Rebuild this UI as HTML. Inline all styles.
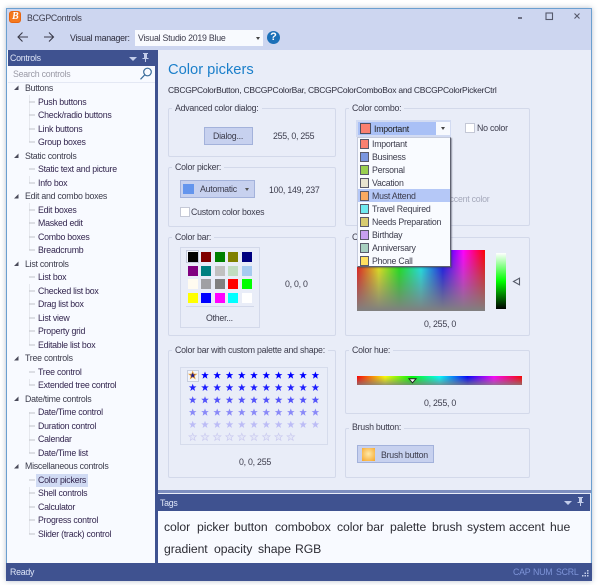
<!DOCTYPE html>
<html><head><meta charset="utf-8">
<style>
html,body{margin:0;padding:0;background:#fff;width:600px;height:585px;overflow:hidden}
#w{position:absolute;left:0;top:0;width:600px;height:585px;overflow:hidden;font-family:"Liberation Sans",sans-serif;font-size:8.8px;letter-spacing:-.25px;color:#3c3c4c;filter:blur(.3px)}
.a,.t,.g{position:absolute}
.t{white-space:nowrap;line-height:12px;height:12px}
.g{border:1px solid #d3d9ea;border-radius:2px;box-sizing:border-box}
.l{background:#e9edf8;padding:0 3px}
.btn{position:absolute;box-sizing:border-box;background:#c7d1ef;border:1px solid #a3b2db}
.sw{position:absolute;width:9px;height:10px;box-sizing:border-box;border:1px solid #5a5a6a}
.c{position:absolute;width:10px;height:10px}
.n{color:#33264f}
.tag{font-size:12.2px;letter-spacing:-.05px;color:#2c2c34;position:absolute;white-space:nowrap;line-height:16px}
</style></head><body><div id="w">
<!-- window -->
<div class="a" style="left:6px;top:8px;width:586px;height:573px;background:#cdd6f0;border:1px solid #6b9fd0;box-sizing:border-box;box-shadow:0 0 5px rgba(90,110,140,.45)"></div>
<div class="a" style="left:7px;top:50px;width:584px;height:513px;background:#e9edf8"></div>
<!-- title -->
<div class="a" style="left:9px;top:11px;width:12px;height:12px;background:#f4791f;border-radius:3px;border:1px solid #e8650f;box-sizing:border-box"></div>
<div class="t" style="left:12px;top:11px;color:#fff;font:italic bold 10px 'Liberation Serif',serif;letter-spacing:0">B</div>
<div class="t" style="left:27px;top:12px">BCGPControls</div>
<svg class="a" style="left:15px;top:30px" width="40" height="14" fill="none" stroke="#3a3a4a" stroke-width="1.1"><path d="M3 7H13M7.500 2.500 3 7l4.500 4.500M29 7H38.500M34 2.500 38.500 7 34 11.500"/></svg>
<div class="t" style="left:70px;top:32px;color:#2c2c3c">Visual manager:</div>
<div class="a" style="left:135px;top:30px;width:128px;height:16px;background:#f8fafe"></div>
<div class="t" style="left:138px;top:32px">Visual Studio 2019 Blue</div>
<div class="a" style="left:256px;top:37px;border:2px solid transparent;border-top:3px solid #444;border-bottom:0"></div>
<div class="a" style="left:267px;top:31px;width:13px;height:13px;border-radius:50%;background:#1b70b8;color:#fff;font:bold 11px/13px 'Liberation Sans',sans-serif;text-align:center;letter-spacing:0">?</div>
<svg class="a" style="left:515px;top:10px" width="70" height="14" fill="none" stroke="#55586a" stroke-width="1.1"><path d="M3 8H7" stroke-width="1.600"/><rect x="31" y="3" width="6.500" height="6.500"/><path d="M59.500 3.500 64.500 8.500M64.500 3.500 59.500 8.500"/></svg>
<!-- left panel -->
<div class="a" style="left:7px;top:50px;width:148px;height:513px;background:#f8faff"></div>
<div class="a" style="left:8px;top:50px;width:147px;height:16px;background:#3f5290"></div>
<div class="a" style="left:155px;top:50px;width:3px;height:531px;background:#3f5290"></div>
<div class="t" style="left:10px;top:52px;color:#dfe6f8">Controls</div>
<svg class="a" style="left:128px;top:51px" width="26" height="13" fill="#c3cdea"><path d="M1 6H9L5 10z"/><path d="M15 2h5v1h-1v4h1.500v1H18v3h-1V8h-2.500V7H16V3h-1z"/></svg>
<div class="t" style="left:13px;top:68px;color:#9a9aa6">Search controls</div>
<svg class="a" style="left:139px;top:67px" width="14" height="14" fill="none" stroke="#3a6c9a" stroke-width="1.200"><circle cx="8.500" cy="5" r="3.800"/><path d="M5.800 7.800 1.500 12.300"/></svg>
<div class="a" style="left:8px;top:82px;width:147px;height:1px;background:#e4e8f4"></div>
<!-- tree lines -->
<div class="a" style="left:36px;top:474px;width:52px;height:13px;background:#d0daf3"></div>
<svg class="a" style="left:0;top:80px" width="40" height="470" fill="none" stroke-width="1"><path stroke="#e6e8ee" d="M29.500 15V62M29.500 96V103M29.500 123V170M29.500 204V265M29.500 299V305M29.500 332V373M29.500 407V454"/><path stroke="#c0c2c8" d="M29 22H35M29 35H35M29 49H35M29 62H35M29 89H35M29 103H35M29 130H35M29 143H35M29 157H35M29 170H35M29 197H35M29 211H35M29 224H35M29 238H35M29 251H35M29 265H35M29 292H35M29 305H35M29 333H35M29 346H35M29 360H35M29 373H35M29 400H35M29 413H35M29 427H35M29 440H35M29 454H35"/></svg>
<svg class="a" style="left:13px;top:84px" width="8" height="390" fill="#4a4a5a"><path d="M1 6 5.500 1.500V6zM1 74 5.500 69.500V74zM1 114.500 5.500 110V114.500zM1 182 5.500 177.500V182zM1 276.500 5.500 272V276.500zM1 317 5.500 312.500V317zM1 384.500 5.500 380V384.500z"/></svg>
<div class="t" style="left:25px;top:82px">Buttons</div>
<div class="t n" style="left:38px;top:96px">Push buttons</div>
<div class="t n" style="left:38px;top:109px">Check/radio buttons</div>
<div class="t n" style="left:38px;top:123px">Link buttons</div>
<div class="t n" style="left:38px;top:136px">Group boxes</div>
<div class="t" style="left:25px;top:150px">Static controls</div>
<div class="t n" style="left:38px;top:163px">Static text and picture</div>
<div class="t n" style="left:38px;top:177px">Info box</div>
<div class="t" style="left:25px;top:190px">Edit and combo boxes</div>
<div class="t n" style="left:38px;top:204px">Edit boxes</div>
<div class="t n" style="left:38px;top:217px">Masked edit</div>
<div class="t n" style="left:38px;top:231px">Combo boxes</div>
<div class="t n" style="left:38px;top:244px">Breadcrumb</div>
<div class="t" style="left:25px;top:258px">List controls</div>
<div class="t n" style="left:38px;top:271px">List box</div>
<div class="t n" style="left:38px;top:285px">Checked list box</div>
<div class="t n" style="left:38px;top:298px">Drag list box</div>
<div class="t n" style="left:38px;top:312px">List view</div>
<div class="t n" style="left:38px;top:325px">Property grid</div>
<div class="t n" style="left:38px;top:339px">Editable list box</div>
<div class="t" style="left:25px;top:352px">Tree controls</div>
<div class="t n" style="left:38px;top:366px">Tree control</div>
<div class="t n" style="left:38px;top:379px">Extended tree control</div>
<div class="t" style="left:25px;top:393px">Date/time controls</div>
<div class="t n" style="left:38px;top:406px">Date/Time control</div>
<div class="t n" style="left:38px;top:420px">Duration control</div>
<div class="t n" style="left:38px;top:433px">Calendar</div>
<div class="t n" style="left:38px;top:447px">Date/Time list</div>
<div class="t" style="left:25px;top:460px">Miscellaneous controls</div>
<div class="t n" style="left:38px;top:474px">Color pickers</div>
<div class="t n" style="left:38px;top:487px">Shell controls</div>
<div class="t n" style="left:38px;top:501px">Calculator</div>
<div class="t n" style="left:38px;top:514px">Progress control</div>
<div class="t n" style="left:38px;top:528px">Slider (track) control</div>
<!-- main -->
<div class="t" style="left:168px;top:60px;height:20px;line-height:20px;font-size:14.700px;letter-spacing:0;color:#1b7fca">Color pickers</div>
<div class="t" style="left:168px;top:84px;color:#2c2c3c;font-size:8.5px;letter-spacing:-.24px">CBCGPColorButton, CBCGPColorBar, CBCGPColorComboBox and CBCGPColorPickerCtrl</div>
<!-- group frames -->
<div class="g" style="left:168px;top:108px;width:168px;height:49px"></div>
<div class="t l" style="left:172px;top:102px">Advanced color dialog:</div>
<div class="g" style="left:168px;top:167px;width:168px;height:60px"></div>
<div class="t l" style="left:172px;top:161px">Color picker:</div>
<div class="g" style="left:168px;top:237px;width:168px;height:99px"></div>
<div class="t l" style="left:172px;top:231px">Color bar:</div>
<div class="g" style="left:168px;top:350px;width:168px;height:128px"></div>
<div class="t l" style="left:172px;top:344px">Color bar with custom palette and shape:</div>
<div class="g" style="left:345px;top:108px;width:185px;height:118px"></div>
<div class="t l" style="left:349px;top:102px">Color combo:</div>
<div class="g" style="left:345px;top:237px;width:185px;height:99px"></div>
<div class="t l" style="left:349px;top:231px">Color picker:</div>
<div class="g" style="left:345px;top:350px;width:185px;height:64px"></div>
<div class="t l" style="left:349px;top:344px">Color hue:</div>
<div class="g" style="left:345px;top:428px;width:185px;height:50px"></div>
<div class="t l" style="left:349px;top:421px">Brush button:</div>
<!-- advanced -->
<div class="btn" style="left:204px;top:127px;width:49px;height:18px"></div>
<div class="t" style="left:213px;top:130px">Dialog...</div>
<div class="t" style="left:273px;top:130px">255, 0, 255</div>
<!-- picker -->
<div class="btn" style="left:180px;top:180px;width:75px;height:18px"></div>
<div class="a" style="left:183px;top:184px;width:11px;height:10px;background:#6495ed"></div>
<div class="t" style="left:200px;top:183px">Automatic</div>
<div class="a" style="left:245px;top:188px;border:2px solid transparent;border-top:3px solid #555;border-bottom:0"></div>
<div class="t" style="left:269px;top:184px">100, 149, 237</div>
<div class="a" style="left:180px;top:207px;width:8px;height:8px;background:#fff;border:1px solid #c4c8d6"></div>
<div class="t" style="left:191px;top:206px">Custom color boxes</div>
<!-- color bar -->
<div class="a" style="left:180px;top:247px;width:80px;height:81px;border:1px solid #d3d9ea;box-sizing:border-box"></div>
<div class="a" style="left:186px;top:250px;width:13px;height:13px;background:#f3f5fb;border:1px solid #c3c9dc;box-sizing:border-box"></div>
<div class="c" style="left:188px;top:252px;background:#000"></div>
<div class="c" style="left:201px;top:252px;background:#800000"></div>
<div class="c" style="left:215px;top:252px;background:#008000"></div>
<div class="c" style="left:228px;top:252px;background:#808000"></div>
<div class="c" style="left:242px;top:252px;background:#000080"></div>
<div class="c" style="left:188px;top:266px;background:#800080"></div>
<div class="c" style="left:201px;top:266px;background:#008080"></div>
<div class="c" style="left:215px;top:266px;background:#c0c0c0"></div>
<div class="c" style="left:228px;top:266px;background:#c0dcc0"></div>
<div class="c" style="left:242px;top:266px;background:#a6caf0"></div>
<div class="c" style="left:188px;top:279px;background:#fffbf0"></div>
<div class="c" style="left:201px;top:279px;background:#a0a0a4"></div>
<div class="c" style="left:215px;top:279px;background:#808080"></div>
<div class="c" style="left:228px;top:279px;background:#f00"></div>
<div class="c" style="left:242px;top:279px;background:#0f0"></div>
<div class="c" style="left:188px;top:293px;background:#ff0"></div>
<div class="c" style="left:201px;top:293px;background:#00f"></div>
<div class="c" style="left:215px;top:293px;background:#f0f"></div>
<div class="c" style="left:228px;top:293px;background:#0ff"></div>
<div class="c" style="left:242px;top:293px;background:#fff"></div>
<div class="a" style="left:186px;top:306px;width:68px;height:1px;background:#d2d8ea"></div>
<div class="t" style="left:206px;top:312px">Other...</div>
<div class="t" style="left:285px;top:278px">0, 0, 0</div>
<!-- stars -->
<div class="a" style="left:180px;top:367px;width:148px;height:78px;border:1px solid #d6dcec;box-sizing:border-box"></div>
<div class="a" style="left:187px;top:370px;width:12px;height:12px;background:#f3f5fb;border:1px solid #c8cede;box-sizing:border-box"></div>
<svg class="a" style="left:180px;top:367px" width="148" height="78">
<defs><polygon id="s" points="0,-3.800 1,-1.200 3.800,-1.200 1.600,0.500 2.400,3.400 0,1.700 -2.400,3.400 -1.600,0.500 -3.800,-1.200 -1,-1.200"/></defs>
<g fill="#0000ff"><use href="#s" x="12.700" y="8.300" fill="#1a1a90" stroke="#f0a030" stroke-width=".7"/><use href="#s" x="25" y="8.300"/><use href="#s" x="37.200" y="8.300"/><use href="#s" x="49.500" y="8.300"/><use href="#s" x="61.800" y="8.300"/><use href="#s" x="74" y="8.300"/><use href="#s" x="86.300" y="8.300"/><use href="#s" x="98.600" y="8.300"/><use href="#s" x="110.800" y="8.300"/><use href="#s" x="123.100" y="8.300"/><use href="#s" x="135.400" y="8.300"/></g>
<g fill="#1f1fff"><use href="#s" x="12.700" y="20.600"/><use href="#s" x="25" y="20.600"/><use href="#s" x="37.200" y="20.600"/><use href="#s" x="49.500" y="20.600"/><use href="#s" x="61.800" y="20.600"/><use href="#s" x="74" y="20.600"/><use href="#s" x="86.300" y="20.600"/><use href="#s" x="98.600" y="20.600"/><use href="#s" x="110.800" y="20.600"/><use href="#s" x="123.100" y="20.600"/><use href="#s" x="135.400" y="20.600"/></g>
<g fill="#5555fa"><use href="#s" x="12.700" y="33"/><use href="#s" x="25" y="33"/><use href="#s" x="37.200" y="33"/><use href="#s" x="49.500" y="33"/><use href="#s" x="61.800" y="33"/><use href="#s" x="74" y="33"/><use href="#s" x="86.300" y="33"/><use href="#s" x="98.600" y="33"/><use href="#s" x="110.800" y="33"/><use href="#s" x="123.100" y="33"/><use href="#s" x="135.400" y="33"/></g>
<g fill="#8a8af8"><use href="#s" x="12.700" y="45.300"/><use href="#s" x="25" y="45.300"/><use href="#s" x="37.200" y="45.300"/><use href="#s" x="49.500" y="45.300"/><use href="#s" x="61.800" y="45.300"/><use href="#s" x="74" y="45.300"/><use href="#s" x="86.300" y="45.300"/><use href="#s" x="98.600" y="45.300"/><use href="#s" x="110.800" y="45.300"/><use href="#s" x="123.100" y="45.300"/><use href="#s" x="135.400" y="45.300"/></g>
<g fill="#bcbcf6"><use href="#s" x="12.700" y="57.600"/><use href="#s" x="25" y="57.600"/><use href="#s" x="37.200" y="57.600"/><use href="#s" x="49.500" y="57.600"/><use href="#s" x="61.800" y="57.600"/><use href="#s" x="74" y="57.600"/><use href="#s" x="86.300" y="57.600"/><use href="#s" x="98.600" y="57.600"/><use href="#s" x="110.800" y="57.600"/><use href="#s" x="123.100" y="57.600"/><use href="#s" x="135.400" y="57.600"/></g>
<g fill="#e4e7f8" stroke="#c8c8ee" stroke-width=".6"><use href="#s" x="12.700" y="70"/><use href="#s" x="25" y="70"/><use href="#s" x="37.200" y="70"/><use href="#s" x="49.500" y="70"/><use href="#s" x="61.800" y="70"/><use href="#s" x="74" y="70"/><use href="#s" x="86.300" y="70"/><use href="#s" x="98.600" y="70"/><use href="#s" x="110.800" y="70"/></g>
</svg>
<div class="t" style="left:239px;top:456px">0, 0, 255</div>
<!-- gradient picker -->
<div class="a" style="left:357px;top:250px;width:128px;height:61px;background:linear-gradient(to bottom,rgba(128,128,128,0),#808080),linear-gradient(to right,#f00,#ff0 17%,#0f0 33%,#0ff 50%,#00f 67%,#f0f 83%,#f00)"></div>
<div class="a" style="left:496px;top:253px;width:10px;height:56px;background:linear-gradient(#fff,#0f0 50%,#000)"></div>
<svg class="a" style="left:512px;top:277px" width="9" height="9" fill="#e9edf8" stroke="#555a68" stroke-width="1.100"><path d="M1.500 4.500 7.500 1.200V7.800z"/></svg>
<div class="t" style="left:424px;top:318px">0, 255, 0</div>
<!-- hue -->
<div class="a" style="left:357px;top:376px;width:165px;height:9px;background:linear-gradient(to bottom,rgba(128,128,128,0),rgba(128,128,128,.8)),linear-gradient(to right,#f00,#ff0 17%,#0f0 33%,#0ff 50%,#00f 67%,#f0f 83%,#f00)"></div>
<svg class="a" style="left:408px;top:378px" width="9" height="6"><path d="M1 .8H8L4.500 4.800z" fill="#fff" stroke="#222" stroke-width="1"/></svg>
<div class="t" style="left:424px;top:397px">0, 255, 0</div>
<!-- brush -->
<div class="btn" style="left:357px;top:445px;width:77px;height:18px"></div>
<div class="a" style="left:362px;top:448px;width:13px;height:13px;background:radial-gradient(circle at 50% 45%,#ffe9a8,#f7a92f 95%)"></div>
<div class="t" style="left:381px;top:449px">Brush button</div>
<!-- no color -->
<div class="a" style="left:465px;top:123px;width:8px;height:8px;background:#fff;border:1px solid #c4c8d6"></div>
<div class="t" style="left:477px;top:122px">No color</div>
<div class="t" style="left:445px;top:193px;color:#a5a9bb">accent color</div>
<!-- combo -->
<div class="a" style="left:356px;top:120px;width:95px;height:17px;background:#d2dbf2"></div>
<div class="a" style="left:358px;top:122px;width:78px;height:13px;background:#a9c0f6"></div>
<div class="a" style="left:436px;top:122px;width:14px;height:13px;background:#f7f9fe"></div>
<div class="a" style="left:360px;top:123px;width:11px;height:11px;box-sizing:border-box;background:#fa8070;border:1px solid #505060"></div>
<div class="t" style="left:374px;top:123px;color:#222">Important</div>
<div class="a" style="left:441px;top:127px;border:2px solid transparent;border-top:3px solid #444;border-bottom:0"></div>
<div class="a" style="left:357px;top:137px;width:94px;height:130px;background:#f9fbff;border:1px solid #c5cbdc;border-right:1px solid #5f6270;border-bottom:1px solid #5f6270;box-sizing:border-box;box-shadow:1px 1px 1px rgba(60,60,80,.5)"></div>
<div class="a" style="left:358px;top:189px;width:92px;height:13px;background:#b5c8f7"></div>
<div class="sw" style="left:360px;top:139px;background:#fa8070"></div><div class="t" style="left:372px;top:138px">Important</div>
<div class="sw" style="left:360px;top:152px;background:#7a96e0"></div><div class="t" style="left:372px;top:151px">Business</div>
<div class="sw" style="left:360px;top:165px;background:#9ad050"></div><div class="t" style="left:372px;top:164px">Personal</div>
<div class="sw" style="left:360px;top:178px;background:#e8e4d0"></div><div class="t" style="left:372px;top:177px">Vacation</div>
<div class="sw" style="left:360px;top:191px;background:#fbaa60"></div><div class="t" style="left:372px;top:190px">Must Attend</div>
<div class="sw" style="left:360px;top:204px;background:#70eaf0"></div><div class="t" style="left:372px;top:203px">Travel Required</div>
<div class="sw" style="left:360px;top:217px;background:#d8cc70"></div><div class="t" style="left:372px;top:216px">Needs Preparation</div>
<div class="sw" style="left:360px;top:230px;background:#c8a0f0"></div><div class="t" style="left:372px;top:229px">Birthday</div>
<div class="sw" style="left:360px;top:243px;background:#a8d0c0"></div><div class="t" style="left:372px;top:242px">Anniversary</div>
<div class="sw" style="left:360px;top:256px;background:#ffe060"></div><div class="t" style="left:372px;top:255px">Phone Call</div>
<!-- tags -->
<div class="a" style="left:158px;top:490px;width:433px;height:3px;background:#7d8ebf"></div>
<div class="a" style="left:158px;top:494px;width:432px;height:17px;background:#3f5290"></div>
<div class="t" style="left:160px;top:497px;color:#dfe6f8">Tags</div>
<svg class="a" style="left:564px;top:496px" width="26" height="13" fill="#c3cdea"><path d="M0 5H8L4 9z"/><path d="M14 1h5v1h-1v4h1.500v1H17v3h-1V7h-2.500V6H15V2h-1z"/></svg>
<div class="a" style="left:158px;top:511px;width:432px;height:52px;background:#f8faff"></div>
<div class="tag" style="left:164px;top:519px">color</div><div class="tag" style="left:197px;top:519px">picker</div><div class="tag" style="left:234px;top:519px">button</div><div class="tag" style="left:275px;top:519px">combobox</div><div class="tag" style="left:337px;top:519px">color bar</div><div class="tag" style="left:390px;top:519px">palette</div><div class="tag" style="left:432px;top:519px">brush</div><div class="tag" style="left:467px;top:519px">system</div><div class="tag" style="left:509px;top:519px">accent</div><div class="tag" style="left:550px;top:519px">hue</div>
<div class="tag" style="left:164px;top:541px">gradient</div><div class="tag" style="left:214px;top:541px">opacity</div><div class="tag" style="left:258px;top:541px">shape</div><div class="tag" style="left:295px;top:541px">RGB</div>
<!-- status -->
<div class="a" style="left:6px;top:563px;width:586px;height:18px;background:#3f5290"></div>
<div class="t" style="left:10px;top:566px;color:#dfe6f8">Ready</div>
<div class="t" style="left:513px;top:566px;color:#7e94d8">CAP</div>
<div class="t" style="left:533px;top:566px;color:#7e94d8">NUM</div>
<div class="t" style="left:556px;top:566px;color:#7e94d8">SCRL</div>
<svg class="a" style="left:581px;top:570px" width="8" height="8" fill="#c3cdea"><path d="M6 0h1.500v1.500H6zM3.500 2.500H5V4H3.500zM6 2.500h1.500V4H6zM1 5h1.500v1.500H1zM3.500 5H5v1.500H3.500zM6 5h1.500v1.500H6z"/></svg>
</div></body></html>
